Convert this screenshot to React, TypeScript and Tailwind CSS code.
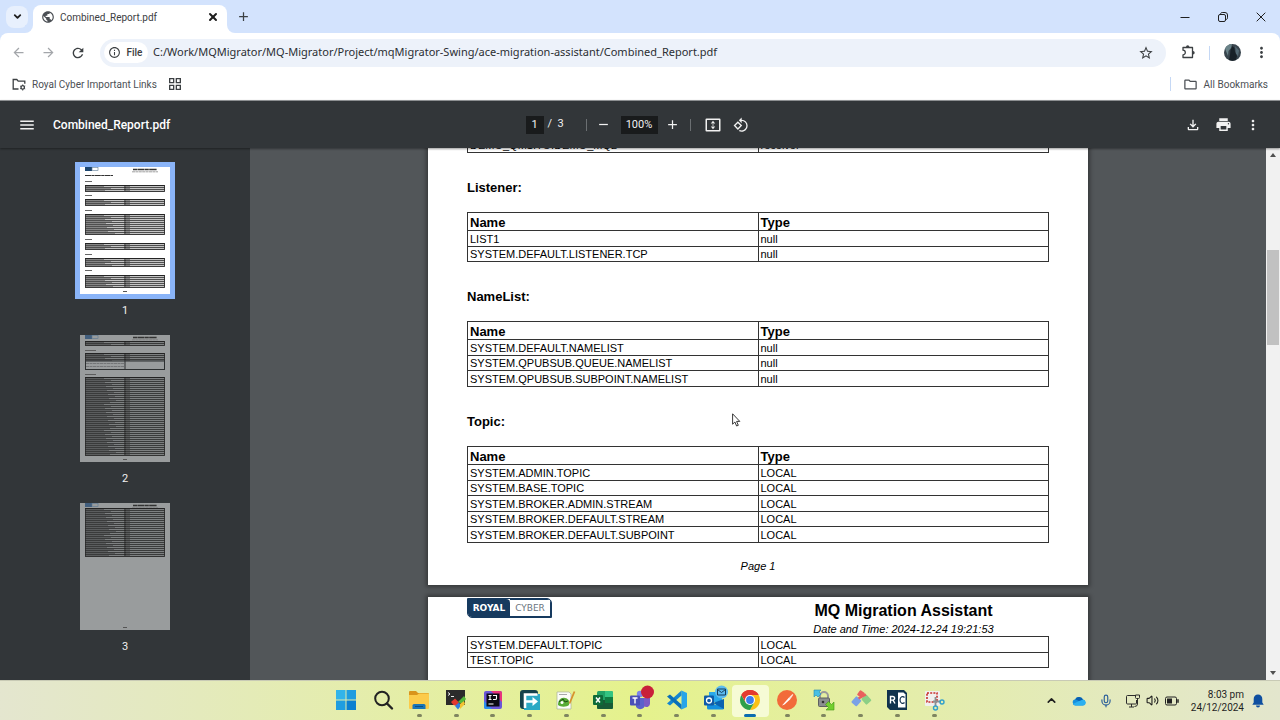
import React, { useState } from 'react';
import {
  MdAdd, MdArrowBack, MdArrowForward, MdMenu, MdMoreVert, MdOutlineFileDownload, MdOutlineFolder,
  MdOutlineGridView, MdOutlineInfo, MdPrint, MdPublic, MdRefresh, MdRemove, MdRotate90DegreesCcw, MdStarOutline,
} from 'react-icons/md';
import { ChevronDown, ChevronUp, Mic, Volume2, X } from 'lucide-react';

type Row = [string, string];

const LISTENERS: Row[] = [['LIST1', 'null'], ['SYSTEM.DEFAULT.LISTENER.TCP', 'null']];
const NAMELISTS: Row[] = [
  ['SYSTEM.DEFAULT.NAMELIST', 'null'],
  ['SYSTEM.QPUBSUB.QUEUE.NAMELIST', 'null'],
  ['SYSTEM.QPUBSUB.SUBPOINT.NAMELIST', 'null'],
];
const TOPICS: Row[] = [
  ['SYSTEM.ADMIN.TOPIC', 'LOCAL'],
  ['SYSTEM.BASE.TOPIC', 'LOCAL'],
  ['SYSTEM.BROKER.ADMIN.STREAM', 'LOCAL'],
  ['SYSTEM.BROKER.DEFAULT.STREAM', 'LOCAL'],
  ['SYSTEM.BROKER.DEFAULT.SUBPOINT', 'LOCAL'],
];
const MORE_TOPICS: Row[] = [['SYSTEM.DEFAULT.TOPIC', 'LOCAL'], ['TEST.TOPIC', 'LOCAL']];

const IconButton = ({ label, className = '', children }: { label: string; className?: string; children: React.ReactNode }) => (
  <button type="button" aria-label={label} className={`flex h-7 shrink-0 items-center justify-center ${className}`}>
    {children}
  </button>
);

/* ---------- browser chrome ---------- */

const TabStrip = () => (
  <div className="flex h-[33px] items-end bg-[#d3e3fd]">
    <button
      type="button"
      aria-label="Search tabs"
      className="ml-1.5 flex size-[22px] items-center justify-center self-center rounded-lg bg-[#e8f0fd] text-[#1f1f1f]"
    >
      <ChevronDown size={11} strokeWidth={4} />
    </button>
    <div className="relative ml-[5px] flex h-7 w-[194px] items-center rounded-t-lg bg-white pb-1 pl-2 pr-2 text-[#3c4043]">
      <span className="absolute -left-2 bottom-0 size-2 rounded-br-lg bg-[#d3e3fd] shadow-[4px_4px_0_4px_white]" />
      <span className="absolute -right-2 bottom-0 size-2 rounded-bl-lg bg-[#d3e3fd] shadow-[-4px_4px_0_4px_white]" />
      <MdPublic size={14} className="relative text-[#4b4f54]" />
      <span className="relative ml-[5px] flex-1 text-[10px]">Combined_Report.pdf</span>
      <button type="button" aria-label="Close tab" className="relative text-[#1f1f1f]"><X size={12} strokeWidth={4} /></button>
    </div>
    <IconButton label="New tab" className="ml-1 w-6 self-center text-[#3c4043]"><MdAdd size={15} /></IconButton>
    <div className="ml-auto flex self-center text-[#1f1f1f]">
      <IconButton label="Minimize" className="w-[38px]">
        <svg width="10" height="10" viewBox="0 0 10 10" stroke="currentColor"><path d="M.5 5.500h9" /></svg>
      </IconButton>
      <IconButton label="Restore" className="w-[38px]">
        <svg width="10" height="10" viewBox="0 0 10 10" fill="none" stroke="currentColor">
          <rect x=".5" y="2.500" width="7" height="7" rx="1.500" />
          <path d="M2.500 2.200C2.700 1 3.200.5 4.200.5h2.800a2.500 2.500 0 0 1 2.500 2.500v2.800c0 1-.6 1.600-1.500 1.700" />
        </svg>
      </IconButton>
      <IconButton label="Close" className="w-[38px]">
        <svg width="10" height="10" viewBox="0 0 10 10" stroke="currentColor"><path d="M.7.7l8.600 8.600M9.300.7L.7 9.300" /></svg>
      </IconButton>
    </div>
  </div>
);

const AddressBar = () => {
  const [url, setUrl] = useState('C:/Work/MQMigrator/MQ-Migrator/Project/mqMigrator-Swing/ace-migration-assistant/Combined_Report.pdf');
  return (
    <div className="bg-[#d3e3fd]">
      <div className="relative flex h-[39px] items-center rounded-t-lg bg-white pl-[3px] pr-1 text-[#3c4043]">
        <IconButton label="Back" className="w-[30px] text-[#a3a6aa]"><MdArrowBack size={15} /></IconButton>
        <IconButton label="Forward" className="w-[30px] text-[#a3a6aa]"><MdArrowForward size={15} /></IconButton>
        <IconButton label="Reload" className="w-[30px]"><MdRefresh size={16} /></IconButton>
        <div className="ml-[7px] flex h-7 flex-1 items-center rounded-full bg-[#edf2fa] pl-1 pr-3">
          <button type="button" className="flex h-[21px] items-center gap-1 rounded-full bg-white px-1 text-[10px] font-medium">
            <MdOutlineInfo size={13} />
            <span className="w-[19px]">File</span>
          </button>
          <input
            aria-label="Address"
            className="ml-[5px] flex-1 bg-transparent font-['Noto_Sans',sans-serif] text-[11px] text-[#2b2e32] outline-none"
            value={url}
            onChange={(e) => setUrl(e.target.value)}
          />
          <button type="button" aria-label="Bookmark this page"><MdStarOutline size={16} /></button>
        </div>
        <IconButton label="Extensions" className="ml-[7px] w-[30px]">
          <svg width="15" height="15" viewBox="0 0 15 15">
            <path d="M2 2.500h9.500v10H2V9.800a2.300 2.300 0 0 0 0-4.600z" fill="none" stroke="currentColor" strokeWidth="1.300" strokeLinejoin="round" />
            <path d="M5 2a1.700 1.700 0 0 1 3.400 0zM12 6a1.700 1.700 0 0 1 0 3.400z" fill="currentColor" />
          </svg>
        </IconButton>
        <span className="ml-1.5 h-3.5 w-px bg-[#c5d8f5]" />
        <IconButton label="Profile" className="ml-[7px] w-[30px]">
          <svg width="17" height="17" viewBox="0 0 17 17">
            <circle cx="8.500" cy="8.500" r="8.500" fill="#38444d" />
            <path d="M1 4.500a8.500 8.500 0 0 1 7-4.400L7 4 4.500 7 4 12z" fill="#6a8389" />
            <path d="M11 2l4 4.500-1 6-2-3z" fill="#536974" />
            <path d="M8.500 2l2 2 .5 4 2 4-1 4a8.500 8.500 0 0 1-7 0l1-5 .5-5z" fill="#172027" />
          </svg>
        </IconButton>
        <IconButton label="Chrome menu" className="w-[29px]"><MdMoreVert size={17} /></IconButton>
      </div>
    </div>
  );
};

const BookmarksBar = () => (
  <div className="flex h-7 items-center bg-white px-3 pb-1 text-[10px] text-[#4b4f54]">
    <button type="button" className="flex items-center gap-1.5">
      <svg width="14" height="13" viewBox="0 0 14 13" fill="none" stroke="#3c4043" strokeWidth="1.300">
        <path d="M6.500 11H1.200V1.500h3.600l1.400 1.600h6.600v2.600" />
        <circle cx="10.700" cy="9.400" r="1.700" />
        <path d="M10.700 6.500v1.200M10.700 11.100v1.400M8.200 8l1 .6M12.200 10.200l1 .6M13.200 8l-1 .6M9.200 10.200l-1 .6" strokeWidth="1" />
      </svg>
      Royal Cyber Important Links
    </button>
    <IconButton label="Apps" className="ml-2 w-5 text-[#3c4043]"><MdOutlineGridView size={16} /></IconButton>
    <span className="ml-auto h-3.5 w-px bg-[#c5d8f5]" />
    <button type="button" className="ml-3 flex items-center gap-1.5"><MdOutlineFolder size={15} />All Bookmarks</button>
  </div>
);

/* ---------- pdf viewer ---------- */

const PdfToolbar = () => {
  const [page, setPage] = useState('1');
  const [zoom, setZoom] = useState('100%');
  return (
    <div className="relative z-10 flex h-12 shrink-0 items-center border-t border-[#8d9092] bg-[#323639] text-[11px] text-[#f1f1f1] shadow-[0_1px_2px_rgba(0,0,0,0.4)]">
      <div className="flex flex-1 items-center pl-3">
        <IconButton label="Menu" className="w-[30px]"><MdMenu size={18} /></IconButton>
        <h1 className="ml-[11px] text-[12px] font-medium text-white">Combined_Report.pdf</h1>
      </div>
      <div className="flex items-center">
        <input
          aria-label="Page number"
          className="h-[18px] w-[18px] bg-[#191b1c] text-center outline-none"
          value={page}
          onChange={(e) => setPage(e.target.value)}
        />
        <span className="ml-1 w-6">/&nbsp; 3</span>
        <span className="ml-3.5 h-3 w-px bg-[#6b6f72]" />
        <IconButton label="Zoom out" className="ml-0.5 w-[30px]"><MdRemove size={15} /></IconButton>
        <input
          aria-label="Zoom level"
          className="ml-0.5 h-[18px] w-[37px] bg-[#191b1c] text-center outline-none"
          value={zoom}
          onChange={(e) => setZoom(e.target.value)}
        />
        <IconButton label="Zoom in" className="w-[30px]"><MdAdd size={15} /></IconButton>
        <span className="ml-0.5 h-3 w-px bg-[#6b6f72]" />
        <IconButton label="Fit to page" className="ml-2 w-7">
          <svg width="16" height="14" viewBox="0 0 16 14" fill="currentColor">
            <path fillRule="evenodd" d="M1.500.5h13a1 1 0 0 1 1 1v11a1 1 0 0 1-1 1h-13a1 1 0 0 1-1-1v-11a1 1 0 0 1 1-1zM2 2v10h12V2z" />
            <path d="M8 2.800l2.200 2.600H5.800zM8 11.200l2.200-2.600H5.800zM7.300 6.500h1.400v1H7.300z" />
          </svg>
        </IconButton>
        <IconButton label="Rotate" className="w-7"><MdRotate90DegreesCcw size={16} /></IconButton>
      </div>
      <div className="flex flex-1 justify-end pr-3">
        <IconButton label="Download" className="w-[30px]"><MdOutlineFileDownload size={16} /></IconButton>
        <IconButton label="Print" className="w-[30px]"><MdPrint size={17} /></IconButton>
        <IconButton label="More actions" className="w-[30px]"><MdMoreVert size={16} /></IconButton>
      </div>
    </div>
  );
};

// each block: top y, number of lines, distance between lines
type Block = { y: number; rows: number; step: number };

const THUMBS: { blocks: Block[]; titles: number[] }[] = [
  {
    titles: [14, 28, 43, 72, 87, 103],
    blocks: [
      { y: 18, rows: 3, step: 2 }, { y: 32, rows: 3, step: 2 }, { y: 47, rows: 10, step: 2 },
      { y: 76, rows: 3, step: 2 }, { y: 91, rows: 4, step: 2 }, { y: 108, rows: 6, step: 2 },
    ],
  },
  { titles: [15, 39], blocks: [{ y: 6, rows: 2, step: 2 }, { y: 18, rows: 4, step: 2 }, { y: 42, rows: 39, step: 2 }] },
  { titles: [], blocks: [{ y: 5, rows: 24, step: 2 }] },
];

const Thumbnail = ({ index, selected }: { index: number; selected: boolean }) => {
  const { blocks, titles } = THUMBS[index];
  return (
    <button type="button" className="flex flex-col items-center text-[11px] text-[#f1f1f1]">
      <span className={`border-[5px] ${selected ? 'border-[#8ab4f8]' : 'border-transparent'}`}>
        <svg width="90" height="127" viewBox="0 0 90 127" className={selected ? 'bg-white' : 'bg-[#999c9d]'}>
          <rect x="5" y="0" width="7" height="4" fill="#1d4670" opacity={selected ? 1 : 0.7} />
          <rect x="12" y=".5" width="6" height="3" fill="none" stroke="#5b7893" strokeWidth=".6" />
          <path d="M53 2.500h24" stroke="#333" strokeWidth="1.400" strokeDasharray="4 .4 7 .4" />
          <path d="M52 4.800h26" stroke="#777" strokeWidth=".7" strokeDasharray="3 .4" />
          {index === 0 && <path d="M5 8.500h28" stroke="#333" strokeWidth="1.200" strokeDasharray="6 .4 3 .4" />}
          {titles.map((y) => <path key={y} d={`M5 ${y + 0.5}h${index === 0 ? 7 : 11}`} stroke="#555" strokeWidth=".9" />)}
          {blocks.map((b) => (
            <g key={b.y}>
              <rect x="5.500" y={b.y + 0.5} width="79" height={b.rows * b.step} fill={selected ? '#c4c4c4' : '#7d8081'} stroke="#2a2a2a" strokeWidth=".9" />
              {Array.from({ length: b.rows }, (_, i) => (
                <g key={i}>
                  <path d={`M5.500 ${b.y + i * b.step + 0.5}H84.500`} stroke="#1c1c1c" strokeWidth=".7" />
                  <path
                    d={`M6 ${b.y + i * b.step + 1.5}h${18 + ((i * 7) % 13)}M46 ${b.y + i * b.step + 1.5}h4`}
                    stroke="#2b2b2b"
                    strokeWidth=".8"
                    opacity=".5"
                  />
                </g>
              ))}
              <path d={`M45 ${b.y}v${b.rows * b.step}`} stroke="#1c1c1c" strokeWidth="1" />
            </g>
          ))}
          {index === 1 && (
            <g stroke="#2c2f30">
              <rect x="5.500" y="26" width="79" height="8.500" fill="#999c9d" />
              <path d="M6 28.500h38M6 31.500h38" strokeWidth=".5" strokeDasharray="3 .5" opacity=".7" />
              <path d="M45 26v8" />
            </g>
          )}
          <path d="M43 124.500h4" stroke="#555" />
        </svg>
      </span>
      <span className="pt-1 leading-[15px]">{index + 1}</span>
    </button>
  );
};

const DataTable = ({ rows, header = true }: { rows: Row[]; header?: boolean }) => (
  <table className="w-full table-fixed border-collapse text-left text-[11px] leading-[14px]">
    {header && (
      <thead>
        <tr className="h-[18px] text-[13px]">
          <th className="border border-[#333] px-0.5 pt-0.5 pb-0 font-bold">Name</th>
          <th className="border border-[#333] px-0.5 pt-0.5 pb-0 font-bold">Type</th>
        </tr>
      </thead>
    )}
    <tbody>
      {rows.map(([name, type]) => (
        <tr key={name} className="odd:h-4 even:h-[15px]">
          <td className="border border-[#333] px-0.5 py-0">{name}</td>
          <td className="border border-[#333] px-0.5 py-0">{type}</td>
        </tr>
      ))}
    </tbody>
  </table>
);

const Section = ({ title, rows }: { title: string; rows: Row[] }) => (
  <section className="pt-[25px]">
    <h2 className="mb-[14px] text-[13px] font-bold leading-5">{title}</h2>
    <DataTable rows={rows} />
  </section>
);

const PAGE = 'w-full max-w-[660px] bg-white px-[39px] text-black shadow-[0_0_4px_2px_rgba(0,0,0,0.35)]';

const Document = () => (
  <main className="relative flex flex-1 flex-col items-center gap-3 overflow-hidden bg-[#525659] font-['Liberation_Sans',sans-serif]">
    <article className={`-mt-3 ${PAGE}`}>
      <DataTable header={false} rows={[['DEMO_QM1.TO.DEMO_MQ2', 'receiver']]} />
      <Section title="Listener:" rows={LISTENERS} />
      <Section title="NameList:" rows={NAMELISTS} />
      <Section title="Topic:" rows={TOPICS} />
      <p className="pt-[15px] pb-[11px] text-center text-[11px] italic leading-4">Page 1</p>
    </article>
    <article className={`h-[800px] shrink-0 ${PAGE}`}>
      <header className="grid h-[39px] grid-cols-2 pt-px">
        <div className="flex h-5 w-[85px] overflow-hidden rounded-tr-[5px] rounded-bl-[5px] border border-[#163a5f] font-['DejaVu_Sans',sans-serif] text-[9px] leading-[18px]">
          <span className="w-[42px] rounded-tr-[4px] bg-[#163a5f] text-center font-bold text-white">ROYAL</span>
          <span className="flex-1 border-y border-r border-[#163a5f] text-center leading-4 text-[#6b7580]">CYBER</span>
        </div>
        <div className="text-center">
          <p className="pt-[3px] text-base font-bold leading-5">MQ Migration Assistant</p>
          <p className="text-[11px] italic leading-4">Date and Time: 2024-12-24 19:21:53</p>
        </div>
      </header>
      <DataTable header={false} rows={MORE_TOPICS} />
    </article>
    <svg className="absolute left-[482px] top-[265px]" width="9" height="14" viewBox="0 0 9 14">
      <path d="M.6.8v10.400l2.300-2.200 1.700 4 1.700-.7-1.700-3.900h3.200z" fill="#fff" stroke="#222" strokeWidth=".9" />
    </svg>
  </main>
);

const ScrollBar = () => (
  <div className="flex w-3.5 flex-col items-center bg-[#f1f1f1] py-[5px]">
    <svg width="6" height="4" viewBox="0 0 6 4"><path d="M0 4l3-4 3 4z" fill="#505050" /></svg>
    <div className="mt-[93px] h-[95px] w-3 bg-[#c1c1c1]" />
    <svg className="mt-auto" width="6" height="4" viewBox="0 0 6 4"><path d="M0 0l3 4 3-4z" fill="#505050" /></svg>
  </div>
);

/* ---------- taskbar ---------- */

const APPS: { name: string; running?: boolean; active?: boolean; icon: React.ReactNode }[] = [
  {
    name: 'Start',
    icon: <><rect width="9.500" height="9.500" fill="#32b4ea" /><rect x="10.500" width="9.500" height="9.500" fill="#1f9de0" /><rect y="10.500" width="9.500" height="9.500" fill="#1f9de0" /><rect x="10.500" y="10.500" width="9.500" height="9.500" fill="#0b7fd0" /></>,
  },
  {
    name: 'Search',
    icon: <g fill="none" stroke="#222"><circle cx="9" cy="8.500" r="6.800" strokeWidth="2" /><path d="M14 13.500l5 5" strokeWidth="2.400" strokeLinecap="round" /></g>,
  },
  {
    name: 'File Explorer', running: true,
    icon: <><path d="M0 2a1 1 0 0 1 1-1h6l2 2h10a1 1 0 0 1 1 1v5H0z" fill="#d9941c" /><path d="M0 5h8l2-1.500h10V18a1 1 0 0 1-1 1H1a1 1 0 0 1-1-1z" fill="#fccb4a" /><path d="M3.500 19v-3.500A1.500 1.500 0 0 1 5 14h10a1.500 1.500 0 0 1 1.500 1.500V19z" fill="#1a75b8" /><path d="M6 16.500h8" stroke="#0c4e84" /></>,
  },
  {
    name: 'MobaXterm', running: true,
    icon: <><rect x="0" y="0" width="19" height="15" fill="#2b2b2b" /><path d="M2 2.500l2 1.500-2 1.500M5 6.500h3" stroke="#eee" fill="none" /><path d="M5 12l4-3.500 4 4-2.500 3.500-3-1z" fill="#e2382e" /><path d="M12 12l6-6 2 3-4 5z" fill="#53b83a" /><path d="M9 16l4-3.500 2 3-3 4z" fill="#2f7de0" /><path d="M14 14l4-3 1 3-5 5z" fill="#f3c331" /></>,
  },
  {
    name: 'IntelliJ IDEA', running: true,
    icon: <><rect x="1" y="1" width="18" height="18" rx="2" fill="#6a57d8" /><path d="M8 1h9a2 2 0 0 1 2 2v9z" fill="#e8337d" /><path d="M1 11l8 8H3a2 2 0 0 1-2-2z" fill="#2b8ff0" /><rect x="3.500" y="3.500" width="13" height="13" fill="#0b0b12" /><path d="M5.500 5.500h3M7 5.500v4M5.500 9.500h3M10 5.500h3.500v3q0 1-1.200 1H10M5.500 14h5" stroke="#fff" fill="none" strokeWidth="1.100" /></>,
  },
  {
    name: 'File Transfer', running: true,
    icon: <><rect x="0" y="0" width="18" height="19" rx="3" fill="#14424c" /><rect x="4" y="4" width="16" height="16" fill="#2ba9c4" /><path d="M5 18V4.500h12.500M6 11.500h8" stroke="#fff" strokeWidth="2.600" fill="none" /><path d="M12.500 7l5.500 4.500-5.500 4.500z" fill="#fff" /></>,
  },
  {
    name: 'Notepad++', running: true,
    icon: <><path d="M1 2h12l2 2v15H1z" fill="#fbfdf6" stroke="#a9b09c" strokeWidth=".7" /><path d="M3 4.500h8" stroke="#a8a8a8" /><path d="M2 15c0-5 3-8 7-7 4 .5 5 4 4 7-2 2-8 2.500-11 0z" fill="#57ac35" /><path d="M3 12l4-3 2 3 3-1" stroke="#1d4b18" fill="none" /><circle cx="6" cy="12.500" r="1.500" fill="#fff" /><path d="M18.500 1.500l-5 12" stroke="#d8912d" strokeWidth="1.800" /></>,
  },
  {
    name: 'Excel', running: true,
    icon: <><rect x="4" y="1" width="16" height="18" rx="1.500" fill="#21a366" /><path d="M12 1h6.500A1.500 1.500 0 0 1 20 2.500V7h-8z" fill="#33c481" /><path d="M4 10h8v9H5.500A1.500 1.500 0 0 1 4 17.500zM12 13h8v4.500a1.500 1.500 0 0 1-1.500 1.500H12z" fill="#185c37" /><path d="M12 7h8v6h-8z" fill="#107c41" /><rect x="0" y="5" width="10" height="10" rx="1" fill="#0d6b38" /><path d="M3 7.500l4 5M7 7.500l-4 5" stroke="#fff" strokeWidth="1.500" /></>,
  },
  {
    name: 'Teams', running: true,
    icon: <><circle cx="10" cy="4" r="3.200" fill="#7b83eb" /><path d="M6 8h9v7a5 5 0 0 1-9 2z" fill="#5b62cc" /><path d="M14 8h6v6a3.500 3.500 0 0 1-6 2z" fill="#7c5cc4" /><rect x="0" y="5.500" width="10" height="10" rx="1" fill="#4b4fb8" /><path d="M2.500 8h5M5 8v5.500" stroke="#fff" strokeWidth="1.400" /><circle cx="17.500" cy="2" r="6.500" fill="#c9203a" /></>,
  },
  {
    name: 'Visual Studio Code', running: true,
    icon: <><path d="M14.500.5L20 3v14l-5.500 2.500z" fill="#27a4e9" /><path d="M14.500.5v5L3 15.500 0 13.500z" fill="#1486cf" /><path d="M0 6.500l3-2 11.500 10v5z" fill="#0a6fb8" /></>,
  },
  {
    name: 'Outlook', running: true,
    icon: <><rect x="5" y="2" width="13" height="10" fill="#28a8ea" /><path d="M3 9l8.500 6L20 9v9a1.500 1.500 0 0 1-1.500 1.500h-14A1.500 1.500 0 0 1 3 18z" fill="#1490df" /><path d="M20 9v10L9 13z" fill="#0a63b0" /><rect x="0" y="5.500" width="10" height="10" rx="1" fill="#0f5ba8" /><circle cx="5" cy="10.500" r="2.500" fill="none" stroke="#fff" strokeWidth="1.300" /><circle cx="17.500" cy="2" r="6.500" fill="#5cbcf0" /><path d="M13.500-1h8v6h-8zM13.500-.5l4 3 4-3" fill="none" stroke="#173f5d" /></>,
  },
  {
    name: 'Google Chrome', running: true, active: true,
    icon: <><path d="M10 10L1.340 5A10 10 0 0 1 18.660 5z" fill="#e33b2e" /><path d="M10 10V0v5h8.660A10 10 0 0 1 10 20l4.300-7.500z" fill="#fbc116" /><path d="M10 10l4.330 2.500L10 20A10 10 0 0 1 1.340 5l4.330 7.500z" fill="#2da04b" /><path d="M1.340 5A10 10 0 0 1 18.660 5H10l-4.300 7.500z" fill="#e33b2e" /><circle cx="10" cy="10" r="5" fill="#fff" /><circle cx="10" cy="10" r="3.900" fill="#3b7ded" /></>,
  },
  {
    name: 'Postman', running: true,
    icon: <><circle cx="10" cy="10" r="10" fill="#f26b3a" /><path d="M5 15.500l7-8 1.500 1.500-6 5.500z" fill="#fff" /><path d="M12 7.500L15.500 4l.8.800-2.800 4.200z" fill="#ffe4da" /></>,
  },
  {
    name: 'WinSCP', running: true,
    icon: <><path d="M6 9V6a4 4 0 0 1 8 0v3" stroke="#9a9a9a" strokeWidth="2" fill="none" /><rect x="4.500" y="8" width="11" height="8.500" rx="1" fill="#8b8f8f" stroke="#5d6060" /><circle cx="9" cy="12" r="1.300" fill="#333" /><path d="M0 0h7L5 2l2 2-3 3-2-2-2 2z" fill="#46bfe4" stroke="#2288b0" strokeWidth=".6" /><path d="M20 20h-8l2.500-2.500-3-3 3-3 3 3L20 12z" fill="#72cf2e" stroke="#3f9415" strokeWidth=".6" /></>,
  },
  {
    name: 'ACE Toolkit', running: true,
    icon: <><rect x="7" y="1" width="6" height="6" rx="1" transform="rotate(35 10 4)" fill="#e9605d" /><rect x="2" y="7" width="7" height="8" rx="1" transform="rotate(42 5 11)" fill="#7aa2e6" /><rect x="12" y="6" width="7" height="8" rx="1" transform="rotate(-42 15 10)" fill="#8ccf85" /><path d="M7.500 8.500l3.500-2 4-2" stroke="#e9605d" strokeWidth="2.500" /></>,
  },
  {
    name: 'Royal Cyber', running: true,
    icon: <><path d="M0 0h17l3 3v17H3l-3-3z" fill="#10324d" /><path d="M11 2.500h5.500l2 2v13H11z" fill="#fff" /><path d="M3.500 13.500v-7h2.300a1.800 1.800 0 0 1 0 3.600H3.500M6 10.200l2 3.300" stroke="#fff" strokeWidth="1.400" fill="none" /><path d="M17.500 7.500c-1.500-1.700-4.500-1-4.500 2.500s3 4.200 4.500 2.500" stroke="#10324d" strokeWidth="1.200" fill="none" /></>,
  },
  {
    name: 'Snipping Tool', running: true,
    icon: <><rect x="1" y="1" width="15" height="15" rx="1" fill="#f0f0ef" /><rect x="3" y="3" width="10" height="9" fill="none" stroke="#c8302c" strokeWidth="1.600" strokeDasharray="2 1.200" /><path d="M11.500 7v9M9 11.500h8" stroke="#8b8f92" strokeWidth="1.800" /><circle cx="18" cy="12" r="2" fill="none" stroke="#33a0cc" strokeWidth="1.400" /><circle cx="11.500" cy="18" r="2" fill="none" stroke="#33a0cc" strokeWidth="1.400" /></>,
  },
];

const Taskbar = () => (
  <footer className="flex h-10 shrink-0 items-center border-t border-[#c8cab5] bg-linear-to-r from-[#e4e6cf] via-[#e5f28c] to-[#e3e6cd] text-[#1f1f1f]">
    <div className="flex-1 pl-4" />
    <nav className="grid w-[625px] grid-cols-[repeat(17,minmax(0,1fr))]">
      {APPS.map((app) => (
        <button
          key={app.name}
          type="button"
          aria-label={app.name}
          className={`flex h-8 flex-col items-center justify-end rounded ${app.active ? 'bg-[#f6fbd5]' : ''}`}
        >
          <svg width="20" height="20" viewBox="0 0 20 20" className="overflow-visible">{app.icon}</svg>
          <span className={`mt-1 h-[3px] rounded-full ${app.active ? 'w-3 bg-[#0a6cb0]' : app.running ? 'w-[5px] bg-[#7f8560]' : 'w-[5px]'}`} />
        </button>
      ))}
    </nav>
    <div className="flex flex-1 items-center justify-end pr-4">
      <button type="button" aria-label="Show hidden icons" className="mr-3.5"><ChevronUp size={13} strokeWidth={3} /></button>
      <svg width="14" height="10" viewBox="0 0 14 10">
        <path d="M3.500 9.500a3.200 3.200 0 0 1-.3-6.300A4.300 4.300 0 0 1 11 3.600a3 3 0 0 1 0 5.900z" fill="#1490df" />
        <path d="M.8 8l9.500-4.500A3 3 0 0 1 11 9.500H3.500A3.200 3.200 0 0 1 .8 8z" fill="#2bb0f0" />
        <path d="M3.200 3.200A4.300 4.300 0 0 1 11 3.600L7 5z" fill="#0a5fb0" />
      </svg>
      <Mic size={14} className="ml-[13px] text-[#2c5f9a]" />
      <div className="ml-[13px] flex items-center gap-1.5">
        <svg width="14" height="14" viewBox="0 0 14 14" fill="none" stroke="#2b2b2b">
          <path d="M9 1.500H1.500a1 1 0 0 0-1 1V9a1 1 0 0 0 1 1h8a1 1 0 0 0 1-1V6M3 13h5M5.500 10v3" />
          <path d="M9.500 1h4v2.500a1 1 0 0 1-1 1h-2a1 1 0 0 1-1-1zM11.500 4.500v5.500q0 2.500-3 2.500" />
        </svg>
        <Volume2 size={13} strokeWidth={2} />
        <svg width="14" height="10" viewBox="0 0 14 10">
          <rect x=".5" y="1" width="11" height="8" rx="1.500" fill="none" stroke="#222" />
          <rect x="2" y="2.500" width="5" height="5" fill="#222" />
          <path d="M12.500 3.500h1v3h-1z" fill="#222" stroke="#222" strokeWidth=".5" />
        </svg>
      </div>
      <time className="ml-3 text-right text-[10px] leading-[13px]">8:03 pm<br />24/12/2024</time>
      <svg className="ml-2" width="12" height="14" viewBox="0 0 12 14" fill="#0f4fa0">
        <path d="M6 .5A4.300 4.300 0 0 1 10.300 5v3.500l1.400 2.300H.3l1.400-2.300V5A4.300 4.300 0 0 1 6 .5zM4 11.500h4a2 2 0 0 1-4 0z" />
      </svg>
    </div>
  </footer>
);

const App: React.FC = () => (
  <div className="flex h-screen flex-col overflow-hidden font-['Roboto','Open_Sans',sans-serif]">
    <TabStrip />
    <AddressBar />
    <BookmarksBar />
    <PdfToolbar />
    <div className="flex min-h-0 flex-1">
      <aside className="flex w-[250px] shrink-0 flex-col items-center gap-3 bg-[#323639] pt-3.5">
        {THUMBS.map((_, i) => <Thumbnail key={i} index={i} selected={i === 0} />)}
      </aside>
      <Document />
      <ScrollBar />
    </div>
    <Taskbar />
  </div>
);

export default App;
